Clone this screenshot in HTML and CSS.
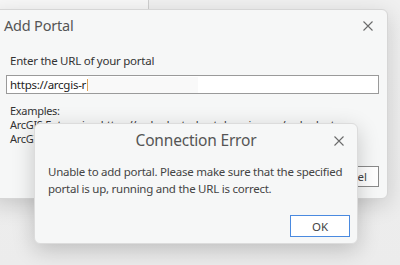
FILE: index.html
```html
<!DOCTYPE html>
<html lang="en">
<head>
    <meta charset="UTF-8">
    <title>Add Portal</title>
    <link rel="stylesheet" href="styles.css">
</head>
<body>
<div class="desktop">
    <div class="back-window">
        <div class="back-left"></div>
        <div class="back-right"></div>
    </div>

    <div class="dialog portal">
        <div class="dialog-head">
            <span class="dialog-title">Add Portal</span>
            <span class="close">
                <svg width="10" height="10" viewBox="0 0 10 10"><path d="M0.5 0.5 L9.5 9.5 M9.5 0.5 L0.5 9.5" stroke="#6a6a6a" stroke-width="1.1" fill="none"/></svg>
            </span>
        </div>
        <div class="portal-body">
            <label class="field-label" for="url">Enter the URL of your portal</label>
            <div class="url-box">
                <span class="url-text">https://arcgis-r</span><span class="caret"></span><span class="redacted"></span>
            </div>
            <div class="examples">
                <div>Examples:</div>
                <div>ArcGIS Enterprise: https://webadaptorhost.domain.com/webadaptor</div>
                <div>ArcGIS Online: https://www.arcgis.com</div>
            </div>
            <div class="portal-actions">
                <button type="button" class="btn">OK</button>
                <button type="button" class="btn">Cancel</button>
            </div>
        </div>
    </div>

    <div class="dialog error">
        <div class="error-head">
            <span class="error-title">Connection Error</span>
            <span class="close small">
                <svg width="10" height="10" viewBox="0 0 10 10"><path d="M0.5 0.5 L9.5 9.5 M9.5 0.5 L0.5 9.5" stroke="#6a6a6a" stroke-width="1.1" fill="none"/></svg>
            </span>
        </div>
        <p class="error-msg">Unable to add portal. Please make sure that the specified portal is up, running and the URL is correct.</p>
        <div class="error-actions">
            <button type="button" class="btn primary">OK</button>
        </div>
    </div>
</div>
</body>
</html>
```

FILE: styles.css
```css
body {
    margin: 0;
    font-family: "Noto Sans", "Open Sans", sans-serif;
    color: #333;
    background-color: #efefef;
}
.desktop {
    position: relative;
    width: 400px;
    height: 265px;
    overflow: hidden;
    background: linear-gradient(#f0f0f0, #ececec);
}
.back-window {
    display: flex;
    height: 9px;
}
.back-left {
    width: 148px;
    background-color: #f7f7f7;
    border-right: 1px solid #cfcfcf;
}
.back-right {
    flex: 1;
    background-color: #f0f0f0;
}
.dialog {
    position: absolute;
    background-color: #f6f7f7;
    border-radius: 6px;
    box-sizing: border-box;
}
.portal {
    left: -8px;
    top: 9px;
    width: 396px;
    height: 190px;
    border: 1px solid #d6d6d6;
    box-shadow: 0 6px 22px rgba(0, 0, 0, 0.16);
}
.dialog-head {
    display: flex;
    justify-content: space-between;
    align-items: center;
    height: 29px;
    padding: 0 14px 0 11px;
}
.dialog-title {
    font-size: 14.5px;
    color: #555;
    letter-spacing: -0.2px;
}
.close {
    display: flex;
    padding-top: 2px;
}
.portal-body {
    padding: 0 8px 0 13px;
}
.field-label {
    display: block;
    margin-top: 14px;
    padding-left: 4px;
    font-size: 11.5px;
    letter-spacing: -0.25px;
    line-height: 16px;
    color: #333;
}
.url-box {
    display: flex;
    align-items: center;
    margin-top: 6px;
    width: 373px;
    height: 19px;
    box-sizing: border-box;
    background-color: #fff;
    border: 1px solid #9a9a9a;
    padding-left: 3px;
    font-size: 11.5px;
    letter-spacing: -0.25px;
    color: #222;
}
.caret {
    width: 1px;
    height: 12px;
    margin-left: 1px;
    background-color: #e0a050;
}
.redacted {
    width: 110px;
    height: 16px;
    background-color: #f9f9f9;
}
.examples {
    margin-top: 10px;
    padding-left: 4px;
    font-size: 11px;
    line-height: 14px;
    letter-spacing: -0.3px;
    color: #333;
}
.portal-actions {
    display: flex;
    justify-content: flex-end;
    gap: 8px;
    margin-top: 20px;
    width: 373px;
}
.btn {
    font-family: inherit;
    width: 60px;
    height: 21px;
    font-size: 11.5px;
    color: #444;
    background-color: #fff;
    border: 1px solid #8a8a8a;
    padding: 0;
}
.error {
    left: 34px;
    top: 123px;
    width: 324px;
    height: 121px;
    border: 1px solid #dcdcdc;
    box-shadow: 0 6px 22px rgba(0, 0, 0, 0.2);
}
.error-head {
    position: relative;
    display: flex;
    justify-content: center;
    align-items: center;
    height: 29px;
    padding-top: 1px;
}
.error-title {
    font-size: 15.5px;
    color: #555;
    letter-spacing: -0.2px;
}
.close.small {
    position: absolute;
    right: 13px;
    top: 10px;
}
.error-msg {
    margin: 9px 14px 0 13px;
    font-size: 11.5px;
    line-height: 17px;
    letter-spacing: -0.25px;
    color: #444;
}
.error-actions {
    display: flex;
    justify-content: flex-end;
    padding: 18px 7px 0 0;
}
.btn.primary {
    border: 1px solid #4a8ae0;
    height: 22px;
}
```
